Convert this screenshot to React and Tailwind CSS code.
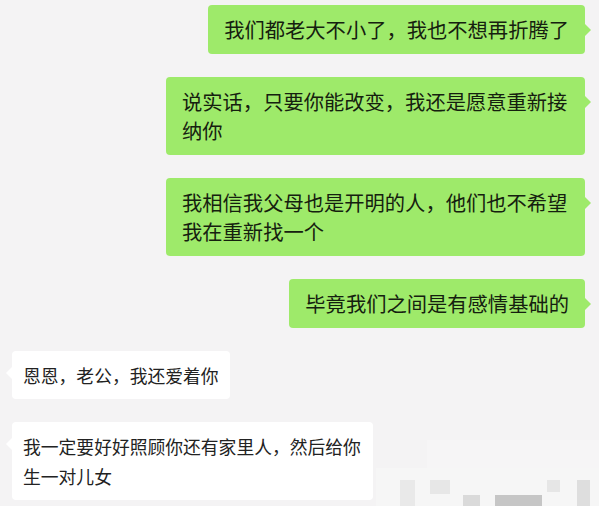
import React from "react";

const font = { fontFamily: '"Noto Sans CJK SC", "Noto Sans", sans-serif' };

function Right({ children }) {
  return (
    <div className="flex justify-end pr-[14px]">
      <div className="relative max-w-[419px] rounded-[4px] bg-[#9eea6a] px-4 py-[10px] text-[20.3px] leading-[29px] text-[#15200f]">
        {children}
        <div className="absolute right-[-6px] top-[19px] h-0 w-0 border-y-[6px] border-l-[6px] border-y-transparent border-l-[#9eea6a]" />
      </div>
    </div>
  );
}

function Left({ children }) {
  return (
    <div className="flex justify-start pl-[12px]">
      <div className="relative max-w-[361px] rounded-[4px] bg-white px-[11px] py-[9px] text-[17.8px] leading-[30px] text-[#222222]">
        {children}
        <div className="absolute left-[-6px] top-[16px] h-0 w-0 border-y-[6px] border-r-[6px] border-y-transparent border-r-white" />
      </div>
    </div>
  );
}

export default function App() {
  return (
    <div
      className="relative h-[506px] w-[599px] overflow-hidden bg-[#f4f3f4]"
      style={font}
    >
      <div className="flex flex-col gap-[23px] pt-[5px]">
        <Right>我们都老大不小了，我也不想再折腾了</Right>
        <Right>说实话，只要你能改变，我还是愿意重新接纳你</Right>
        <Right>我相信我父母也是开明的人，他们也不希望我在重新找一个</Right>
        <Right>毕竟我们之间是有感情基础的</Right>
        <Left>恩恩，老公，我还爱着你</Left>
        <Left>我一定要好好照顾你还有家里人，然后给你生一对儿女</Left>
      </div>
      {/* mosaic watermark */}
      <div className="absolute left-[427px] top-[440px] h-[28px] w-[172px] bg-[#f6f5f6]" />
      <div className="absolute left-[376px] top-[468px] h-[38px] w-[223px] bg-[#f6f6f6]" />
      <div className="absolute left-[400px] top-[480px] h-[26px] w-[15px] bg-[#e9e9e9]" />
      <div className="absolute left-[430px] top-[480px] h-[14px] w-[20px] bg-[#e7e7e7]" />
      <div className="absolute left-[463px] top-[495px] h-[11px] w-[17px] bg-[#dadada]" />
      <div className="absolute left-[495px] top-[495px] h-[11px] w-[47px] bg-[#c6c6c6]" />
      <div className="absolute left-[547px] top-[480px] h-[12px] w-[13px] bg-[#e6e6e6]" />
      <div className="absolute left-[577px] top-[480px] h-[26px] w-[13px] bg-[#dedede]" />
    </div>
  );
}
